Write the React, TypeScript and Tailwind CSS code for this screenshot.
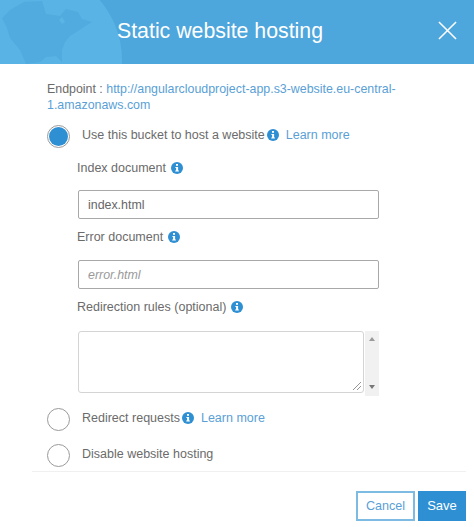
import type { ReactNode } from "react";

function InfoIcon({ className = "" }: { className?: string }) {
  return (
    <svg viewBox="0 0 12 12" className={`h-3 w-3 shrink-0 ${className}`} aria-hidden="true">
      <circle cx="6" cy="6" r="6" fill="#2e8fd3" />
      <rect x="5" y="2" width="2" height="1.8" fill="#fff" />
      <path d="M4.4 5h2.7v3.6h0.8v1H4.2v-1h0.9V6H4.4z" fill="#fff" />
    </svg>
  );
}

function Radio({ checked = false }: { checked?: boolean }) {
  return (
    <span className="flex h-[23px] w-[23px] shrink-0 items-center justify-center rounded-full border border-[#9a9a9a] bg-white">
      {checked ? <span className="h-[19px] w-[19px] rounded-full bg-[#2e8fd3]" /> : null}
    </span>
  );
}

function LearnMore() {
  return <a className="ml-[7px] text-[#5a9fd6]">Learn more</a>;
}

function RadioRow({
  checked,
  children,
  className = "",
}: {
  checked?: boolean;
  children: ReactNode;
  className?: string;
}) {
  return (
    <div className={`flex items-start ${className}`}>
      <Radio checked={checked} />
      <div className="ml-3 mt-[2px] flex h-4 items-center leading-4">{children}</div>
    </div>
  );
}

function FieldLabel({ children, className = "" }: { children: ReactNode; className?: string }) {
  return (
    <div className={`-ml-px flex h-4 items-center gap-[5px] leading-4 ${className}`}>
      {children}
      <InfoIcon />
    </div>
  );
}

export default function App() {
  return (
    <div className="h-[527px] w-[474px] overflow-hidden bg-white font-['Liberation_Sans',Arial,sans-serif] text-[12.5px] text-[#6b6b6b]">
      <header className="relative flex h-16 items-center overflow-hidden bg-[#4da6dc]">
        <svg viewBox="0 0 130 64" className="absolute left-0 top-0 h-16 w-[130px]" aria-hidden="true">
          <circle cx="30" cy="60" r="92" fill="#59b3e4" />
          <path
            className="blur-[0.6px]"
            d="M2 18 L10 10 L24 2 L42 1 L46 14 L60 16 L66 9 L78 12 L82 19 L92 22 L84 27 L78 31 L70 36 L65 42 L62 50 L62 62 L56 56 L46 57 L40 62 L26 64 L20 50 L10 38 L7 28Z"
            fill="#51abdf"
          />
          <path d="M62 17 L65 22 L62 24 L59 20Z" fill="#5ab5e5" />
        </svg>
        <h1 className="relative ml-[117px] text-[21.3px] leading-none text-white">Static website hosting</h1>
        <svg viewBox="0 0 20 20" className="absolute right-[17px] top-[21px] h-[19px] w-[19px]" aria-hidden="true">
          <path d="M1 1 L19 19 M19 1 L1 19" stroke="#fff" strokeWidth="1.6" fill="none" />
        </svg>
      </header>

      <main className="px-[47px] pt-[17px]">
        <p className="w-[355px] text-[12.4px] leading-4">
          Endpoint : <a className="text-[#5a9fd6]">http://angularcloudproject-app.s3-website.eu-central-1.amazonaws.com</a>
        </p>

        <RadioRow checked className="mt-[12px]">
          Use this bucket to host a website
          <InfoIcon className="ml-[2px]" />
          <LearnMore />
        </RadioRow>

        <div className="ml-[31px] mt-[6px]">
          <FieldLabel className="mt-3">Index document</FieldLabel>
          <input
            readOnly
            value="index.html"
            className="mt-[14px] block h-[29px] w-[301px] rounded-[2px] border border-[#a8a8a8] bg-white px-[9px] text-[12.4px] text-[#666] outline-none"
          />
          <FieldLabel className="mt-[10px]">Error document</FieldLabel>
          <input
            readOnly
            placeholder="error.html"
            className="mt-[15px] block h-[29px] w-[301px] rounded-[2px] border border-[#a8a8a8] bg-white px-[9px] text-[12.4px] italic text-[#666] outline-none placeholder:text-[#999]"
          />
          <FieldLabel className="mt-[10px]">Redirection rules (optional)</FieldLabel>
          <div className="mt-[16px] flex items-start gap-px">
            <div className="relative h-[62px] w-[286px] rounded-[3px] border border-[#d4d4d4] bg-white">
              <svg viewBox="0 0 10 10" className="absolute bottom-px right-px h-[10px] w-[10px]" aria-hidden="true">
                <path d="M1 9 L9 1 M5 9 L9 5" stroke="#8a8a8a" strokeWidth="0.9" fill="none" />
              </svg>
            </div>
            <div className="flex h-[65px] w-[14px] flex-col items-center justify-between bg-[#f1f1f1] py-[6px]">
              <span className="h-0 w-0 border-x-[3.5px] border-b-[4px] border-x-transparent border-b-[#9a9a9a]" />
              <span className="mb-[1px] h-0 w-0 border-x-[3.5px] border-t-[4px] border-x-transparent border-t-[#777]" />
            </div>
          </div>
        </div>

        <RadioRow className="mt-3">
          Redirect requests
          <InfoIcon className="ml-[2px]" />
          <LearnMore />
        </RadioRow>
        <RadioRow className="mt-[13px]">Disable website hosting</RadioRow>
      </main>

      <footer className="mx-8 mt-[4px] flex w-[434px] justify-end gap-[3px] border-t border-[#f0f0f0] pt-[19px]">
        <button
          type="button"
          className="h-[30px] w-[59px] border-2 border-[#7dbbe2] bg-white text-[12.6px] text-[#5a9fd6]"
        >
          Cancel
        </button>
        <button type="button" className="h-[30px] w-[48px] bg-[#2e8fd3] text-[13px] text-white">
          Save
        </button>
      </footer>
    </div>
  );
}
